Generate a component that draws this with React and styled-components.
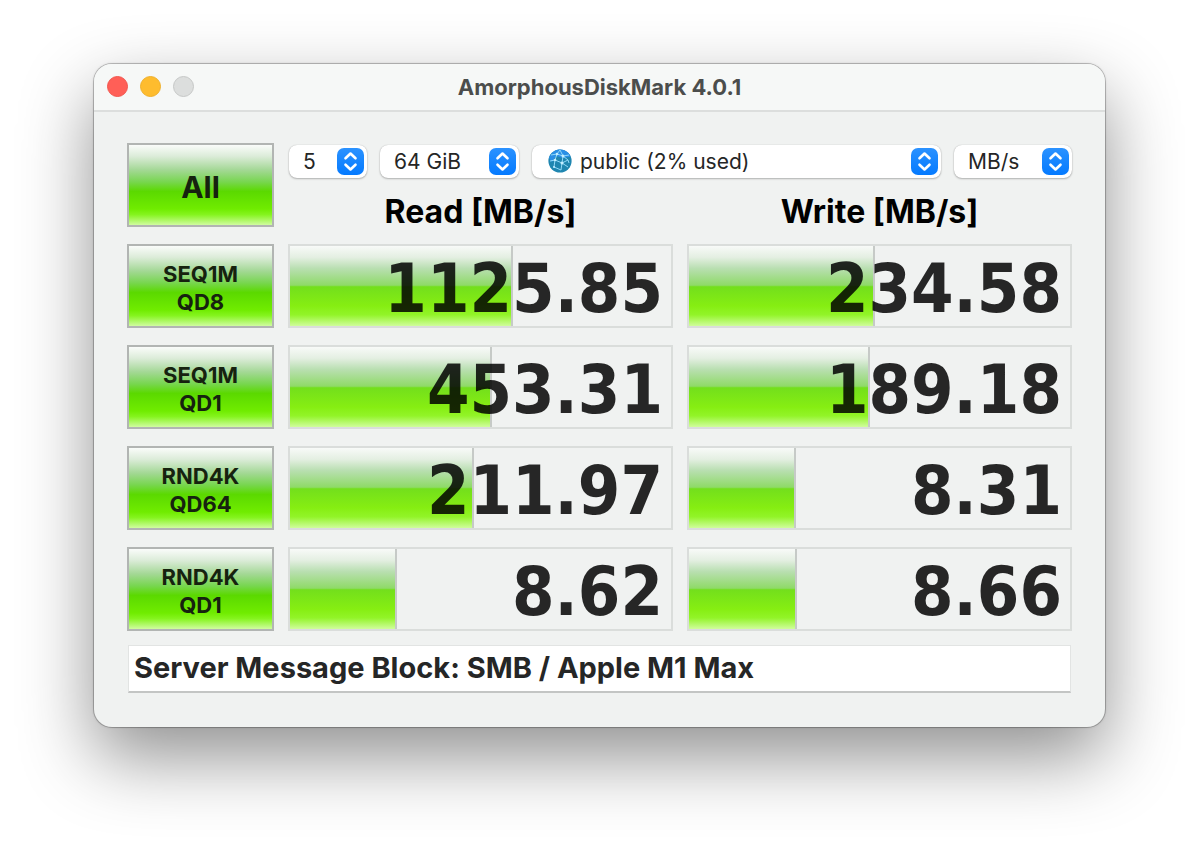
import React, { useState } from 'react';
import styled, { createGlobalStyle } from 'styled-components';

const GlobalStyle = createGlobalStyle`
  *, *::before, *::after { box-sizing: border-box; }
  body {
    margin: 0;
    background: #ffffff;
    font-family: Inter, "Liberation Sans", sans-serif;
    color: #252626;
  }
  button, input, select { font-family: inherit; color: inherit; margin: 0; }
`;

const Desktop = styled.div`
  min-height: 100vh;
  padding: 64px 94px 124px;
  overflow: hidden;
`;

const AppWindow = styled.main`
  background: #f0f2f1;
  border-radius: 18px;
  box-shadow:
    0 0 0 1px rgba(0, 0, 0, 0.2),
    0 0 3px rgba(0, 0, 0, 0.2),
    0 30px 72px rgba(0, 0, 0, 0.44);
`;

const TitleBar = styled.header`
  display: grid;
  grid-template-columns: 1fr auto 1fr;
  align-items: center;
  height: 48px;
  padding: 0 13px 1px;
  background: #f6f8f7;
  border-bottom: 2px solid #dcdedd;
  border-radius: 18px 18px 0 0;
`;

const Lights = styled.div`
  display: flex;
  gap: 12px;
`;

const Light = styled.button`
  width: 21px;
  height: 21px;
  padding: 0;
  border: 1px solid ${(p) => p.$edge};
  border-radius: 50%;
  background: ${(p) => p.$fill};
`;

const Title = styled.h1`
  margin: 0;
  font-size: 22px;
  line-height: 28px;
  font-weight: 700;
  color: #4b4d4c;
`;

const Content = styled.div`
  padding: 31px 33px 34px;
`;

const Board = styled.div`
  display: grid;
  grid-template-columns: 147px minmax(0, 1fr) minmax(0, 1fr);
  grid-auto-rows: 84px;
  gap: 17px 14px;
`;

const TestButton = styled.button`
  padding: 3px 0 0;
  border: 2px solid #b2b5b3;
  background: linear-gradient(
    180deg,
    #fafcfa 0%,
    #dcecd9 14%,
    #a4d896 31%,
    #78d650 46%,
    #5bd900 58%,
    #70ec00 80%,
    #85f41e 87%,
    #d0fca0 100%
  );
  font-size: ${(p) => (p.$large ? '30px' : '22px')};
  line-height: 28px;
  font-weight: 700;
  color: #16220f;
  white-space: pre-line;
`;

const Controls = styled.div`
  grid-column: 2 / -1;
  display: grid;
  grid-template-columns: 1fr 1fr;
  column-gap: 14px;
  row-gap: 18px;
  align-content: start;
`;

const Pickers = styled.div`
  grid-column: 1 / -1;
  display: flex;
  gap: 13px;
  padding: 2px 0 0 1px;
`;

const ColumnTitle = styled.h2`
  margin: 0;
  font-size: 32px;
  line-height: 32px;
  font-weight: 700;
  text-align: center;
  color: #000000;
`;

const PickerBox = styled.div`
  position: relative;
  flex: ${(p) => (p.$width ? `0 0 ${p.$width}px` : '1 1 0')};
  height: 33px;
  border-radius: 8px;
  background: #ffffff;
  box-shadow: 0 0 1px rgba(0, 0, 0, 0.25), 0 1px 2px rgba(0, 0, 0, 0.25);
`;

const PickerSelect = styled.select`
  appearance: none;
  display: block;
  width: 100%;
  height: 32px;
  padding: 0 36px 0 ${(p) => (p.$icon ? '48px' : '14px')};
  border: 0;
  border-radius: 8px;
  background: transparent;
  font-size: 21px;
`;

const PickerIcon = styled.span`
  position: absolute;
  left: 16px;
  top: 4px;
  display: flex;
  pointer-events: none;
`;

const Stepper = styled.span`
  position: absolute;
  right: 3px;
  top: 3px;
  width: 27px;
  height: 27px;
  border-radius: 7px;
  background: linear-gradient(180deg, #2b92ff, #047aff);
  pointer-events: none;
`;

const Meter = styled.div`
  position: relative;
  border: 2px solid #dadddb;
`;

const Fill = styled.div`
  height: 100%;
  border-right: 2px solid #c6cac7;
  background: linear-gradient(
    180deg,
    #f8faf8 0%,
    #e4efe2 14%,
    #b9dfb1 28%,
    #8fda68 49%,
    #73df1c 51%,
    #86ee12 75%,
    #92f428 86%,
    #d0fd9c 100%
  );
`;

const Reading = styled.output`
  position: absolute;
  inset: 0;
  padding: 0 8px;
  font-family: "DejaVu Sans Condensed", "DejaVu Sans", sans-serif;
  font-size: 68px;
  line-height: 86px;
  font-weight: 700;
  text-align: right;
  color: rgba(0, 0, 0, 0.845);
`;

const NotesRow = styled.div`
  padding: 14px 1px 0;
`;

const Notes = styled.input`
  display: block;
  width: 100%;
  height: 48px;
  padding: 0 5px 2px;
  border: 1px solid #e2e4e3;
  border-bottom: 2px solid #c3c5c4;
  border-radius: 0;
  background: #ffffff;
  font-size: 29px;
  font-weight: 700;
`;

const TESTS = [
  { name: 'SEQ1M\nQD8', read: ['1125.85', 58.6], write: ['234.58', 48.8] },
  { name: 'SEQ1M\nQD1', read: ['453.31', 53], write: ['189.18', 47.5] },
  { name: 'RND4K\nQD64', read: ['211.97', 48.2], write: ['8.31', 28.1] },
  { name: 'RND4K\nQD1', read: ['8.62', 28.2], write: ['8.66', 28.3] },
];

function Globe() {
  return (
    <svg width="24" height="24" viewBox="0 0 24 24" fill="none" aria-hidden="true">
      <circle cx="12" cy="12" r="11.6" fill="#1f86b0" />
      <path d="M1 9C3 3 8 .5 12 .5c5 0 9 3 10.500 7L15 9 8 7 4 13Z" fill="#2a8fe6" />
      <g stroke="#8fd8f8" strokeWidth="1" strokeLinejoin="round">
        <path d="M3 6l6-1 6 2 6-1M9 5L7 11l7 3 6-3-5-4M7 11l-5 1M7 11l-1 7 7 3 1-7 6 4M15 7l-1 7M9 5l3-4 3 6M20 11l1 3" />
      </g>
      <g fill="#c2edff">
        <circle cx="9" cy="5" r="1.300" />
        <circle cx="15" cy="7" r="1.500" />
        <circle cx="7" cy="11" r="1.300" />
        <circle cx="14" cy="14" r="1.500" />
        <circle cx="6" cy="18" r="1" />
      </g>
    </svg>
  );
}

function Picker({ label, value, width, icon }) {
  return (
    <PickerBox $width={width}>
      <PickerSelect aria-label={label} $icon={Boolean(icon)} defaultValue={value}>
        <option>{value}</option>
      </PickerSelect>
      {icon && <PickerIcon>{icon}</PickerIcon>}
      <Stepper>
        <svg width="27" height="27" viewBox="0 0 27 27" fill="none" stroke="#ffffff" strokeWidth="2.600" strokeLinecap="round" strokeLinejoin="round">
          <path d="M8.500 10.300l5-4.800 5 4.800M8.500 16.700l5 4.800 5-4.800" />
        </svg>
      </Stepper>
    </PickerBox>
  );
}

function Result({ label, result: [value, percent] }) {
  return (
    <Meter>
      <Fill style={{ width: `${percent}%` }} />
      <Reading aria-label={label}>{value}</Reading>
    </Meter>
  );
}

export default function App() {
  const [notes, setNotes] = useState('Server Message Block: SMB / Apple M1 Max');
  return (
    <Desktop>
      <GlobalStyle />
      <AppWindow>
        <TitleBar>
          <Lights>
            <Light aria-label="Close" $fill="#ff5f57" $edge="#f2554d" />
            <Light aria-label="Minimize" $fill="#febc2e" $edge="#efb02c" />
            <Light aria-label="Zoom" $fill="#dcdedd" $edge="#c6c8c7" />
          </Lights>
          <Title>AmorphousDiskMark 4.0.1</Title>
        </TitleBar>
        <Content>
          <Board>
            <TestButton $large>All</TestButton>
            <Controls>
              <Pickers>
                <Picker label="Test count" value="5" width={78} />
                <Picker label="Test size" value="64 GiB" width={139} />
                <Picker label="Volume" value="public (2% used)" icon={<Globe />} />
                <Picker label="Unit" value="MB/s" width={118} />
              </Pickers>
              <ColumnTitle>Read [MB/s]</ColumnTitle>
              <ColumnTitle>Write [MB/s]</ColumnTitle>
            </Controls>
            {TESTS.map((test) => (
              <React.Fragment key={test.name}>
                <TestButton>{test.name}</TestButton>
                <Result label={`${test.name} read`} result={test.read} />
                <Result label={`${test.name} write`} result={test.write} />
              </React.Fragment>
            ))}
          </Board>
          <NotesRow>
            <Notes aria-label="Notes" value={notes} onChange={(e) => setNotes(e.target.value)} />
          </NotesRow>
        </Content>
      </AppWindow>
    </Desktop>
  );
}
